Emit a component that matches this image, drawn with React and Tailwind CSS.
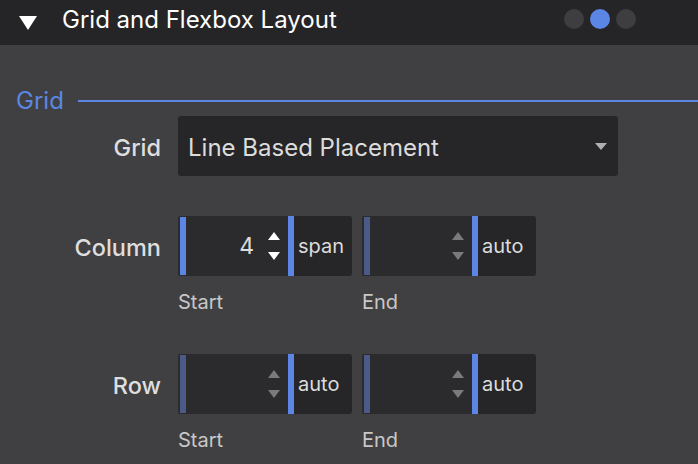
import React from "react";

function Spinner({ active }) {
  const color = active ? "border-b-white" : "border-b-[#7a7a7c]";
  const colorDown = active ? "border-t-white" : "border-t-[#7a7a7c]";
  return (
    <div className="flex flex-col items-center gap-[12px] mr-[8px]">
      <div className={`w-0 h-0 border-l-[6px] border-r-[6px] border-b-[8px] border-l-transparent border-r-transparent ${color}`} />
      <div className={`w-0 h-0 border-l-[6px] border-r-[6px] border-t-[8px] border-l-transparent border-r-transparent ${colorDown}`} />
    </div>
  );
}

function LineInput({ value, tag, active }) {
  return (
    <div className="flex h-[60px] w-[174px] rounded-[3px] overflow-hidden bg-[#262628]">
      <div className="flex items-center w-[110px] bg-[#2b2b2d] py-[1px] pl-[2px]">
        <div className={`w-[6px] h-full ${active ? "bg-[#5b86e5]" : "bg-[#4b5a87]"}`} />
        <div className="flex-1 text-right pr-[14px] text-[23px] text-[#dcdcdc]">{value}</div>
        <Spinner active={active} />
      </div>
      <div className="w-[6px] h-full bg-[#5b86e5]" />
      <div className="flex items-center pl-[4px] text-[20px] text-[#dcdcdc]">{tag}</div>
    </div>
  );
}

function FieldRow({ label, start, end }) {
  return (
    <>
      <div className="flex items-center mt-[40px]">
        <div className="w-[161px] pt-[3px] text-right text-[23.5px] font-medium text-[#dedede]">{label}</div>
        <div className="ml-[17px] flex gap-[10px]">
          <LineInput {...start} />
          <LineInput {...end} />
        </div>
      </div>
      <div className="flex mt-[14px] ml-[178px] text-[20px] text-[#c8c8c8] leading-[24px]">
        <div className="w-[184px]">Start</div>
        <div>End</div>
      </div>
    </>
  );
}

export default function App() {
  return (
    <div className="w-[698px] h-[464px] overflow-hidden bg-[#404042]" style={{ fontFamily: "Inter, 'Noto Sans', sans-serif" }}>
      <div className="h-[45px] bg-[#252527] flex items-center">
        <div className="ml-[19px] w-0 h-0 border-l-[9px] border-r-[9px] border-t-[14px] border-l-transparent border-r-transparent border-t-white" />
        <div className="ml-[25px] mb-[6px] text-[24px] text-white">Grid and Flexbox Layout</div>
        <div className="ml-auto mr-[62px] mb-[8px] flex gap-[6px]">
          <div className="w-[20px] h-[20px] rounded-full bg-[#3e3e40]" />
          <div className="w-[20px] h-[20px] rounded-full bg-[#5b86e5]" />
          <div className="w-[20px] h-[20px] rounded-full bg-[#3e3e40]" />
        </div>
      </div>

      <div className="pt-[44px]">
        <div className="flex items-center h-[24px]">
          <div className="ml-[16px] text-[24px] text-[#5b87e3]">Grid</div>
          <div className="ml-[14px] flex-1 h-[2px] bg-[#5b87e3]" />
        </div>

        <div className="flex items-center mt-[3px]">
          <div className="w-[161px] pt-[3px] text-right text-[23.5px] font-medium text-[#dedede]">Grid</div>
          <div className="ml-[17px] w-[440px] h-[60px] rounded-[3px] bg-[#262628] flex items-center pl-[10px] pr-[11px]">
            <div className="flex-1 text-[24px] text-[#dcdcdc] pt-[3px]">Line Based Placement</div>
            <div className="w-0 h-0 border-l-[6px] border-r-[6px] border-t-[7px] border-l-transparent border-r-transparent border-t-[#b0b0b0]" />
          </div>
        </div>

        <FieldRow
          label="Column"
          start={{ value: "4", tag: "span", active: true }}
          end={{ value: "", tag: "auto", active: false }}
        />
        <FieldRow
          label="Row"
          start={{ value: "", tag: "auto", active: false }}
          end={{ value: "", tag: "auto", active: false }}
        />
      </div>
    </div>
  );
}
